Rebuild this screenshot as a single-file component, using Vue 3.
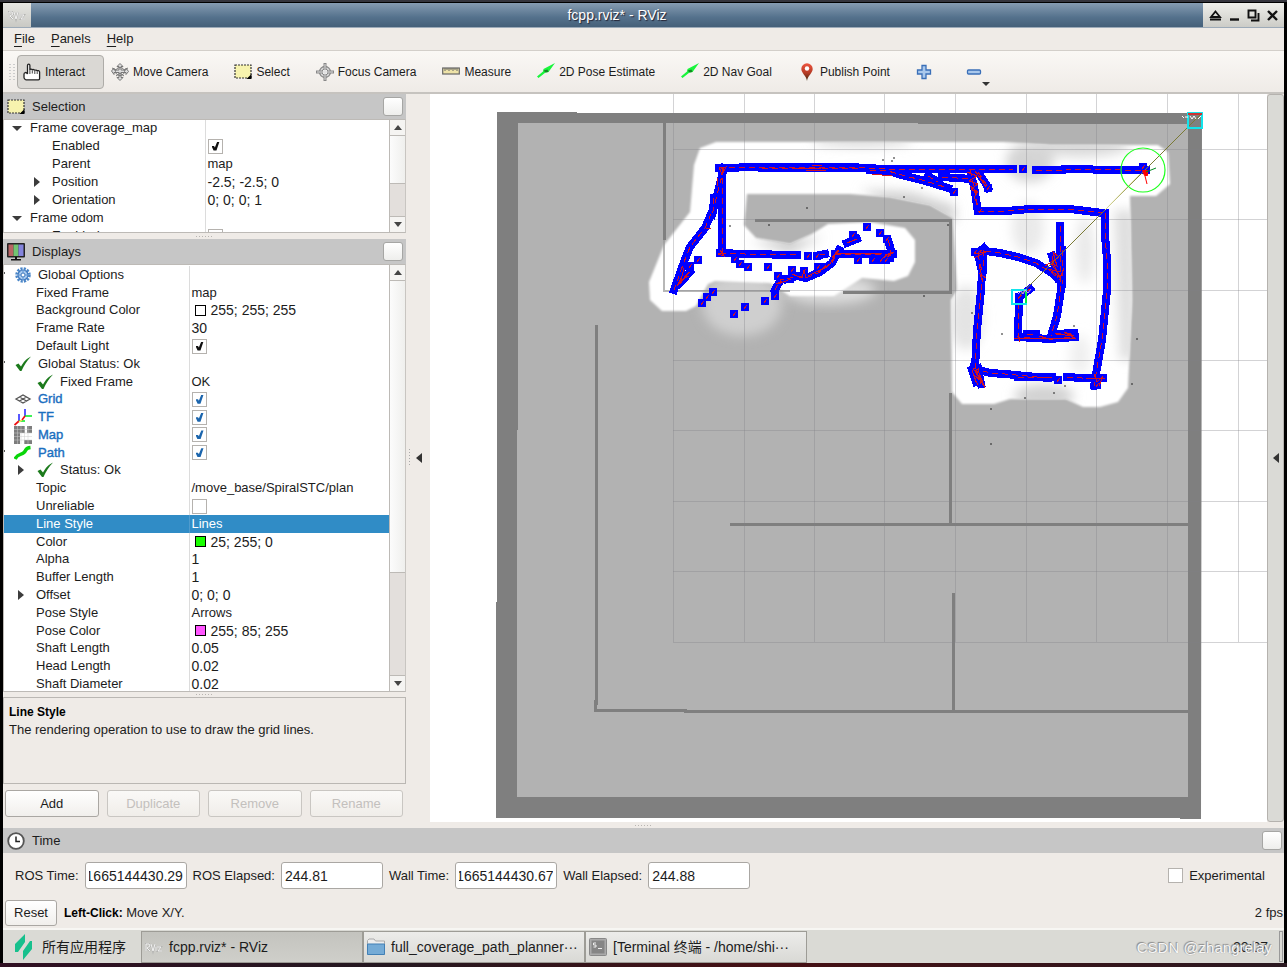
<script setup>
import { ref, onMounted } from 'vue'

const tools = [
  { icon: 'hand', label: 'Interact', active: true },
  { icon: 'move', label: 'Move Camera' },
  { icon: 'select', label: 'Select' },
  { icon: 'focus', label: 'Focus Camera' },
  { icon: 'ruler', label: 'Measure' },
  { icon: 'arrow', label: '2D Pose Estimate' },
  { icon: 'arrow', label: '2D Nav Goal' },
  { icon: 'pin', label: 'Publish Point' },
]

const selectionRows = [
  { name: 'Frame coverage_map', level: 0, arrow: 'down' },
  { name: 'Enabled', level: 1, check: true },
  { name: 'Parent', level: 1, value: 'map' },
  { name: 'Position', level: 1, arrow: 'right', value: '-2.5; -2.5; 0', num: true },
  { name: 'Orientation', level: 1, arrow: 'right', value: '0; 0; 0; 1', num: true },
  { name: 'Frame odom', level: 0, arrow: 'down' },
  { name: 'Enabled', level: 1, check: true },
]

const displayRows = [
  { name: 'Global Options', level: 0, icon: 'gear', tick: true },
  { name: 'Fixed Frame', level: 1, value: 'map' },
  { name: 'Background Color', level: 1, value: '255; 255; 255', num: true, swatch: '#ffffff' },
  { name: 'Frame Rate', level: 1, value: '30', num: true },
  { name: 'Default Light', level: 1, check: true },
  { name: 'Global Status: Ok', level: 0, icon: 'ok', tick: true },
  { name: 'Fixed Frame', level: 1, icon: 'ok', value: 'OK' },
  { name: 'Grid', level: 0, icon: 'grid', check: true, blue: true },
  { name: 'TF', level: 0, icon: 'tf', check: true, blue: true },
  { name: 'Map', level: 0, icon: 'map', check: true, blue: true },
  { name: 'Path', level: 0, icon: 'path', check: true, blue: true, tick: true },
  { name: 'Status: Ok', level: 1, icon: 'ok', arrow: 'right' },
  { name: 'Topic', level: 1, value: '/move_base/SpiralSTC/plan' },
  { name: 'Unreliable', level: 1, check: false },
  { name: 'Line Style', level: 1, value: 'Lines', selected: true },
  { name: 'Color', level: 1, value: '25; 255; 0', num: true, swatch: '#19ff00' },
  { name: 'Alpha', level: 1, value: '1', num: true },
  { name: 'Buffer Length', level: 1, value: '1', num: true },
  { name: 'Offset', level: 1, arrow: 'right', value: '0; 0; 0', num: true },
  { name: 'Pose Style', level: 1, value: 'Arrows' },
  { name: 'Pose Color', level: 1, value: '255; 85; 255', num: true, swatch: '#ff55ff' },
  { name: 'Shaft Length', level: 1, value: '0.05', num: true },
  { name: 'Head Length', level: 1, value: '0.02', num: true },
  { name: 'Shaft Diameter', level: 1, value: '0.02', num: true },
]

const trees = [
  { key: 'selection', title: 'Selection', icon: 'select', rows: selectionRows },
  { key: 'displays', title: 'Displays', icon: 'monitor', rows: displayRows },
]

const times = [
  { id: 'ros-time', label: 'ROS Time:', value: '1665144430.29' },
  { id: 'ros-elapsed', label: 'ROS Elapsed:', value: '244.81' },
  { id: 'wall-time', label: 'Wall Time:', value: '1665144430.67' },
  { id: 'wall-elapsed', label: 'Wall Elapsed:', value: '244.88' },
]
const timeInputs = ref([])
onMounted(() => {
  timeInputs.value.forEach((el) => { el.scrollLeft = el.scrollWidth })
})

const gridX = [673, 744, 814, 884, 955, 1026, 1096, 1167, 1238]
const gridY = [149, 219, 290, 360, 430, 501, 571, 642]

const trails = [
  '719,168 760,167 850,167 885,169 1013,169',
  '762,168 858,168',
  '1036,170 1062,170', '1065,169 1120,170 1146,170',
  '870,170 888,171 905,176 922,180 935,184 948,188',
  '942,177 972,179', '928,176 938,182',
  '722,168 722,253',
  '724,168 717,195 712,215', '714,198 713,210',
  '711,214 705,228 690,247 684,262 674,290',
  '690,272 679,284',
  '720,253 745,254 797,255', '820,255 825,254',
  '835,254 893,254', '888,240 891,250 890,258',
  '775,290 781,279 790,279', '787,279 797,276 806,278 820,272 832,263 839,250',
  '847,243 857,239',
  '970,170 974,186 977,206', '978,172 986,184 988,188',
  '978,211 1006,211 1030,209 1070,209 1103,213',
  '1105,213 1105,235 1107,260 1107,290 1102,340 1097,368 1094,386',
  '985,251 1000,253 1018,257 1036,263 1052,273 1060,280',
  '978,254 982,272 981,290 977,330 975,368',
  '977,254 984,248', '983,250 983,270',
  '1060,226 1060,250 1061,290 1057,316 1051,336',
  '1052,256 1058,278', '1062,250 1062,284',
  '973,368 990,373 1005,374 1048,378', '1018,377 1052,377',
  '972,370 976,382', '978,368 981,384',
  '1067,377 1082,378 1103,378',
  '1030,289 1019,297 1018,337 1050,339 1075,337', '1027,334 1036,334', '1055,334 1074,333',
]

const marks = [
  [1023, 169], [954, 192], [698, 260], [690, 266], [702, 303], [707, 297], [713, 292], [734, 314],
  [745, 307], [765, 301], [775, 296], [808, 256], [817, 256], [735, 259], [740, 264], [748, 267],
  [768, 267], [778, 276], [792, 270], [804, 271], [818, 267], [824, 267], [853, 235], [867, 227],
  [880, 233], [887, 239], [858, 260], [873, 260], [881, 260], [886, 260], [1058, 380], [1143, 167],
  [980, 211], [1097, 385], [975, 252], [988, 188], [1019, 297],
]

const dots = [
  [882, 160], [893, 158], [891, 161], [921, 188], [903, 197], [806, 208], [729, 226], [768, 225],
  [947, 225], [971, 313], [1001, 334], [1073, 326], [1131, 384], [1136, 339], [990, 409],
  [990, 444], [1024, 398], [923, 296], [1053, 393], [1064, 386],
]

const tangles = [
  'M967 172l10 4-8 5 9 3-7 5 6 4M975 171l9 12M980 178l6 9M970 186l8 6-4 5 4 8',
  'M1045 266l14-9-6-5 4 14-6-3 9 14-12-8 13 3M1052 260l8 18 4-10',
  'M974 258l14-7-8 2-6 1M979 264l4 18-3-8 6 4',
  'M973 368l12 20-6-15-4-3 7 12-9-8 5 11M975 372l8 9',
  'M1086 379l19-1M1094 374l3 8 6-6-4 10',
  'M1014 339l60-1-25 1-10-3 14 4M1056 334l18 2-10-4 12 7M1018 334l2 8',
  'M719 170l7-3-4 8-3-8M717 186l1-8M706 228l5 1M720 250l4 6-6-2 8-1',
  'M680 284l9-12-12 14 5-10M684 268l-3 12 8-4',
  'M776 284l6-3-4 3 13-5M792 274l10 4 2-8 2 8M808 276l18-9-8 5 12-8M830 264l8-14-6 8',
  'M881 260l7-6 6-2-7 5M847 243l10-4M838 253l44 0',
  'M797 168h24M806 170h20M812 165h10M872 174l20 2',
]
</script>

<template>
  <div class="screen">
    <svg class="defs" aria-hidden="true">
      <symbol id="i-hand" viewBox="0 0 18 18">
        <path d="M4.500 11V2.500c0-1.800 2.400-1.800 2.400 0V7c0-1.200 2.400-1.200 2.400.300.200-1.200 2.500-1 2.500.400.200-1 2.400-.800 2.400.400.200-.800 2.400-.600 2.400.800V15.500c0 .800-.500 1.300-1.200 1.300H3c-1 0-2-1.400-2-2.600v-3c0-2 2.400-2.400 3.500-.200z" fill="#fff" stroke="#222" stroke-width="1.300" />
        <path d="M6.900 7v4M9.300 7.500v3M11.800 8v3M14.200 8v3" stroke="#444" stroke-width="1" />
      </symbol>
      <symbol id="i-move" viewBox="0 0 18 18">
        <path d="M9 .500l3 3h-2v3.500h5V5l2.500 3.500-2.500 3V9.500h-5v5h2L9 17.500l-3-3h2v-5H3v2L.500 8 3 5v2h5V3.500H6z" fill="#ddd" stroke="#777" />
        <ellipse cx="9" cy="8.500" rx="4.500" ry="4" fill="none" stroke="#777" />
        <path d="M1 5l4 2M13 7l4-2M5 13l4-3 4 3" stroke="#777" fill="none" />
      </symbol>
      <symbol id="i-select" viewBox="0 0 18 18">
        <rect x="1" y="2" width="16" height="13" fill="#f7f3ae" stroke="#333" stroke-width="1.200" stroke-dasharray="2 1" />
        <path d="M17.500 11v5h-5z" fill="#000" />
      </symbol>
      <symbol id="i-focus" viewBox="0 0 18 18">
        <circle cx="9" cy="9" r="5.500" fill="#ddd" stroke="#888" stroke-width="1.300" />
        <circle cx="9" cy="9" r="3" fill="#eee" stroke="#888" />
        <path d="M9 0v7M9 11v7M0 9h7M11 9h7" stroke="#888" stroke-width="3" />
        <path d="M9 1v16M1 9h16" stroke="#ddd" stroke-width="1" />
      </symbol>
      <symbol id="i-ruler" viewBox="0 0 18 18">
        <rect x=".700" y="5" width="16.600" height="6" fill="#eee3a8" stroke="#666" stroke-width="1.200" />
        <path d="M3 5v3M5 5v2M7 5v3M9 5v2M11 5v3M13 5v2M15 5v3" stroke="#666" />
      </symbol>
      <symbol id="i-arrow" viewBox="0 0 18 18">
        <path d="M0 13.500L6 8.500 6.500 6 18 0l-6.500 9-3 .500-7 5.500z" fill="#19f53c" />
        <path d="M6.500 7.500l4-1L11.500 9 8.500 9.500z" fill="#108a20" />
      </symbol>
      <symbol id="i-pin" viewBox="0 0 18 18">
        <defs><linearGradient id="pin-g" x2="0" y2="1"><stop stop-color="#ee5540" /><stop offset=".550" stop-color="#b53b25" /><stop offset="1" stop-color="#3a2a10" /></linearGradient></defs>
        <path d="M9 18C8.500 13 3.300 10 3.300 6a5.700 5.700 0 0 1 11.400 0C14.700 10 9.500 13 9 18z" fill="url(#pin-g)" />
        <circle cx="9" cy="5.500" r="2.200" fill="#fff" />
      </symbol>
      <symbol id="i-plus" viewBox="0 0 18 18">
        <path d="M7 2.500h4V7h4.500v4H11v4.500H7V11H2.500V7H7z" fill="#a9c8ec" stroke="#3a6fb8" stroke-width="1.300" />
      </symbol>
      <symbol id="i-minus" viewBox="0 0 18 18">
        <rect x="2.500" y="7" width="13" height="4" rx="1" fill="#a9c8ec" stroke="#3a6fb8" stroke-width="1.300" />
      </symbol>
      <symbol id="i-monitor" viewBox="0 0 18 18">
        <rect x="0" y="0" width="18" height="14.500" rx="1" fill="#222" />
        <path d="M1.500 1.500h5v11.500h-5z" fill="#b86464" /><path d="M6.500 1.500h5v11.500h-5z" fill="#72c472" /><path d="M11.500 1.500h5v11.500h-5z" fill="#8484dc" />
        <path d="M8 14h2v2h4v1.500H4V16h4z" fill="#111" />
      </symbol>
      <symbol id="i-gear" viewBox="0 0 18 18">
        <circle cx="9" cy="9" r="6.500" fill="none" stroke="#4a86c8" stroke-width="2.500" stroke-dasharray="2.200 1.200" />
        <circle cx="9" cy="9" r="5" fill="#a9caee" stroke="#3d78be" stroke-width="1.200" />
        <circle cx="9" cy="9" r="2" fill="#fff" stroke="#3d78be" />
        <path d="M9 4v3M9 11v3M4 9h3M11 9h3" stroke="#5d94d2" />
      </symbol>
      <symbol id="i-ok" viewBox="0 0 18 18">
        <path d="M1.500 10l3-1.500 2.500 3C9.500 7 12 4 17 1.500 12.500 6 10 10.500 7.500 16H6z" fill="#1c7a1c" />
      </symbol>
      <symbol id="i-grid" viewBox="0 0 18 18">
        <path d="M2 9l7-4 7 4-7 4zM5.500 7l7 4M12.500 7l-7 4" fill="none" stroke="#555" stroke-width="1.300" />
      </symbol>
      <symbol id="i-tf" viewBox="0 0 18 18">
        <path d="M5 6v7M11 1v7" stroke="#22f" stroke-width="1.500" /><path d="M5 13h6M11 8h7" stroke="#0e2" stroke-width="1.500" />
        <path d="M5 13l-4.500 4M11 8l-3 4" stroke="#e11" stroke-width="1.700" /><path d="M8 12l-3 2" stroke="#fd5" stroke-width="1.500" />
      </symbol>
      <symbol id="i-map" viewBox="0 0 18 18">
        <path d="M0 0h18v18H0z" fill="#fff" />
        <path d="M0 0h11v7H6v11H0zM13 0h5v7h-5zM10 14h8v4h-8z" fill="#7d7d7d" />
        <path d="M3.500 0v18M7 0v18M10.500 0v18M14 0v18M0 3.500h18M0 7h18M0 10.500h18M0 14h18" stroke="#ccc" stroke-width=".500" />
      </symbol>
      <symbol id="i-path" viewBox="0 0 18 18">
        <path d="M1 15c3-6 6-3.500 9-6.500S11 4 16.500 3.500" fill="none" stroke="#0ad50a" stroke-width="3.500" />
      </symbol>
      <symbol id="i-clock" viewBox="0 0 18 18">
        <circle cx="9" cy="9" r="7.800" fill="#fff" stroke="#555" stroke-width="1.800" />
        <path d="M9 4.500V9.500h4" fill="none" stroke="#222" stroke-width="1.500" />
      </symbol>
      <symbol id="i-rviz" viewBox="0 0 18 18">
        <path d="M1 13V6h3l1 2-3 2 3 3M6 6l2 7 2-7M11 9v4M12 9h4l-3 4h4" fill="none" stroke="#b5b5b3" stroke-width="2" />
        <path d="M1 13V6h3l1 2-3 2 3 3M6 6l2 7 2-7M11 9v4M12 9h4l-3 4h4" fill="none" stroke="#f3f3f2" stroke-width="1" />
      </symbol>
      <symbol id="i-start" viewBox="0 0 18 26">
        <path d="M10 0v8L3 18H0v-8zM8 26v-9l7-10h2v8z" fill="#17c08d" />
      </symbol>
      <symbol id="i-folder" viewBox="0 0 18 18">
        <path d="M.500 16V2.500L2 1h5l1.500 2h9V16z" fill="#eee" stroke="#aaa" />
        <path d="M.500 6h17v10.500H.500z" fill="#75abd6" stroke="#4280b5" />
      </symbol>
      <symbol id="i-term" viewBox="0 0 18 18">
        <rect x=".500" y=".500" width="17" height="17" rx="1" fill="#aaa" stroke="#888" />
        <rect x="2.500" y="2.500" width="13" height="13" fill="#858585" />
        <path d="M7 5H4.500v2H7v2H4.500M9 10.500h4" fill="none" stroke="#eee" />
      </symbol>
    </svg>

    <div class="window">
      <header class="titlebar">
        <span class="win-icon"><svg class="ico"><use href="#i-rviz" /></svg></span>
        <h1>fcpp.rviz* - RViz</h1>
        <div class="win-buttons">
          <button aria-label="Shade"><svg viewBox="0 0 13 13"><path d="M6.500 2.500L11 8H2zM1 10.500h11" fill="none" stroke="#111" stroke-width="1.800" /></svg></button>
          <button aria-label="Minimize"><svg viewBox="0 0 13 13"><path d="M2 10.500h9" stroke="#111" stroke-width="2.400" /></svg></button>
          <button aria-label="Maximize"><svg viewBox="0 0 13 13"><path d="M1.500 1.500h7v7h-7zM11.500 4v7.500H4" fill="none" stroke="#111" stroke-width="1.900" /></svg></button>
          <button aria-label="Close"><svg viewBox="0 0 13 13"><path d="M2 2l9 9M11 2l-9 9" stroke="#111" stroke-width="2.400" /></svg></button>
        </div>
      </header>

      <nav class="menubar">
        <button><u>F</u>ile</button>
        <button><u>P</u>anels</button>
        <button><u>H</u>elp</button>
      </nav>

      <div class="toolbar">
        <span class="grip"></span>
        <button v-for="t in tools" :key="t.label" class="tool" :class="{ active: t.active }">
          <svg class="ico"><use :href="'#i-' + t.icon" /></svg>{{ t.label }}
        </button>
        <button class="tool bare" aria-label="Add tool"><svg class="ico"><use href="#i-plus" /></svg></button>
        <button class="tool bare" aria-label="Remove tool"><svg class="ico"><use href="#i-minus" /></svg><i class="drop"></i></button>
      </div>

      <main class="work">
        <aside class="dock">
          <template v-for="p in trees" :key="p.key">
            <h2 class="dock-title">
              <svg class="ico"><use :href="'#i-' + p.icon" /></svg><span>{{ p.title }}</span>
              <button class="float" :aria-label="'Float ' + p.title"></button>
            </h2>
            <div class="tree" :class="p.key">
              <div class="rows">
                <table>
                  <colgroup><col class="c-name"><col></colgroup>
                  <tbody>
                    <tr v-for="(r, i) in p.rows" :key="i" :class="{ selected: r.selected }">
                      <td :class="'level' + r.level">
                        <div class="cell" :class="{ ticked: r.tick }">
                          <span v-if="!r.icon || r.level" class="slot"><i v-if="r.arrow" :class="r.arrow"></i></span>
                          <svg v-if="r.icon" class="ico"><use :href="'#i-' + r.icon" /></svg>
                          <label :for="p.key + i" :class="{ blue: r.blue }">{{ r.name }}</label>
                        </div>
                      </td>
                      <td class="value">
                        <div class="cell" :class="{ num: r.num }">
                          <input v-if="r.check !== undefined" :id="p.key + i" type="checkbox" :checked="r.check" :class="{ blue: r.blue }">
                          <span v-if="r.swatch" class="swatch" :style="{ background: r.swatch }"></span>
                          <output v-if="r.value" :id="p.key + i">{{ r.value }}</output>
                        </div>
                      </td>
                    </tr>
                  </tbody>
                </table>
              </div>
              <div class="scroll">
                <span class="sbtn"><i class="up"></i></span>
                <span class="track"><span class="thumb"></span></span>
                <span class="sbtn"><i class="dn"></i></span>
              </div>
            </div>
            <div class="split" :class="p.key"></div>
          </template>
          <section class="help">
            <b>Line Style</b>
            <p>The rendering operation to use to draw the grid lines.</p>
          </section>
          <div class="actions">
            <button class="btn">Add</button>
            <button class="btn" disabled>Duplicate</button>
            <button class="btn" disabled>Remove</button>
            <button class="btn" disabled>Rename</button>
          </div>
        </aside>

        <div class="vsplit"><span class="vdots"></span><i class="left"></i></div>

        <svg class="view" viewBox="430 94 837 728" role="img" aria-label="Map view">
          <defs>
            <filter id="soft" x="-30%" y="-30%" width="160%" height="160%"><feGaussianBlur stdDeviation="6" /></filter>
            <filter id="edge" x="-5%" y="-5%" width="110%" height="110%"><feGaussianBlur stdDeviation="1" /></filter>
            <path id="clear" d="M716 142H1003L1050 145H1158L1168 152 1170 184 1156 196H1130L1132 300 1128 388 1118 402 1100 407H1083L1066 399H1010L994 404H962L952 392 951 300 957 290 953 218 930 205 890 197 850 194H747L744 225 756 238 790 244 812 234 828 224 870 222 905 228 915 240V262L908 276 894 281 862 278 834 296H790L770 283 715 281 708 284 696 306 686 311H662L650 300 649 282 664 245 690 212 694 165 700 148z" />
            <clipPath id="clear-area"><use href="#clear" /></clipPath>
          </defs>
          <path d="M497 112h80v1h625l-1 706h-21v-1H496V602h1z" fill="#7f7f7f" />
          <path d="M518 123h400v1h270v673H517V430h1z" fill="#b2b2b2" />

          <ellipse cx="742" cy="304" rx="40" ry="32" fill="#cfcfcf" filter="url(#soft)" />
          <ellipse cx="830" cy="290" rx="46" ry="14" fill="#ddd" filter="url(#soft)" />
          <use href="#clear" fill="#fff" filter="url(#edge)" />
          <g clip-path="url(#clear-area)">
            <g filter="url(#soft)">
              <ellipse cx="862" cy="141" rx="50" ry="5" fill="#d3d3d3" />
              <ellipse cx="1030" cy="162" rx="24" ry="20" fill="#d4d4d4" />
              <ellipse cx="1080" cy="145" rx="50" ry="12" fill="#d9d9d9" />
              <path d="M750 240L790 252 824 236 800 240z" fill="#c0c0c0" />
              <path d="M860 190L910 192 955 206V222L890 206z" fill="#cfcfcf" />
              <ellipse cx="1028" cy="228" rx="16" ry="26" fill="#eaeaea" />
              <ellipse cx="966" cy="318" rx="17" ry="32" fill="#e4e4e4" />
              <ellipse cx="1044" cy="396" rx="30" ry="12" fill="#d2d2d2" />
              <path d="M1114 210H1135V360H1120z" fill="#dedede" />
              <ellipse cx="1085" cy="250" rx="9" ry="34" fill="#e9e9e9" />
              <ellipse cx="1080" cy="355" rx="10" ry="20" fill="#efefef" />
            </g>
          </g>

          <g class="walls">
            <path d="M664 123V240M755 220H950V292H843M950 393V524M730 524H1188M953 593V711M597 325L596 710H685V711H1188" />
            <path d="M664 240V291H790" class="faint" />
          </g>

          <g class="grid">
            <path v-for="x in gridX" :key="x" :d="`M${x} 94V642`" />
            <path v-for="y in gridY" :key="y" :d="`M673 ${y}H1267`" />
          </g>

          <path v-for="d in dots" :key="d.join()" :d="`M${d[0]} ${d[1]}h2`" class="dot" />
          <g class="blue-trails">
            <polyline v-for="p in trails" :key="p" :points="p" />
            <rect v-for="m in marks" :key="m.join()" :x="m[0] - 4" :y="m[1] - 4" width="8" height="8" />
          </g>
          <g class="red-trails">
            <polyline v-for="p in trails" :key="p" :points="p" />
            <path v-for="m in marks" :key="m.join()" :d="`M${m[0] - 1} ${m[1] + 2}l3-4`" />
            <path v-for="t in tangles" :key="t" :d="t" />
          </g>

          <path d="M1202 113L1020 295" stroke="#7a7a35" stroke-width="1" />
          <path d="M1140 174L1105 210" stroke="#e0e0a0" stroke-width="1" />
          <circle cx="1143" cy="170" r="22" fill="none" stroke="#1dff1d" stroke-width="1.200" />
          <path d="M1142.500 170.500h5v5h-3zM1145 176l2 8" fill="#f00" stroke="#f00" />
          <path d="M1146 172l10-4" stroke="#008a20" />
          <rect x="1188" y="113" width="14" height="15" class="frame" />
          <path d="M1188 114h14" stroke="#c33" stroke-width="2" />
          <path d="M1182 116l2 2M1185 117h3M1190 116l2 3 2-3 2 3M1198 119l3-3" stroke="#fff" fill="none" />
          <rect x="1012" y="290" width="14" height="14" class="frame" />
          <path d="M1026 291v12" stroke="#0e4" stroke-width="2" />
          <path d="M1018 294l3-3 2 3 2-4 3 3 3-4" stroke="#d9e" fill="none" />
        </svg>

        <div class="rightbar"><i class="left"></i></div>
      </main>

      <div class="split"></div>
      <section class="time">
        <h2 class="dock-title">
          <svg class="ico"><use href="#i-clock" /></svg><span>Time</span>
          <button class="float" aria-label="Float Time"></button>
        </h2>
        <div class="time-row">
          <template v-for="t in times" :key="t.id">
            <label :for="t.id">{{ t.label }}</label>
            <input :id="t.id" ref="timeInputs" type="text" :value="t.value" readonly>
          </template>
          <label class="exp"><input type="checkbox">Experimental</label>
        </div>
      </section>
      <footer class="status">
        <button class="btn">Reset</button>
        <span><b>Left-Click:</b> Move X/Y.</span>
        <span class="fps">2 fps</span>
      </footer>

      <div class="taskbar">
        <button class="start"><svg><use href="#i-start" /></svg>所有应用程序</button>
        <button class="task current"><svg class="ico"><use href="#i-rviz" /></svg>fcpp.rviz* - RViz</button>
        <button class="task"><svg class="ico"><use href="#i-folder" /></svg>full_coverage_path_planner···</button>
        <button class="task"><svg class="ico"><use href="#i-term" /></svg>[Terminal 终端 - /home/shi···</button>
        <time>20:07</time>
        <span class="edge-box"></span>
        <span class="watermark">CSDN @zhangrelay</span>
      </div>
    </div>
  </div>
</template>

<style>
body { margin: 0; background: #000; }
</style>

<style scoped>
* { box-sizing: border-box; }
.screen {
  min-height: 100vh;
  display: flex;
  padding: 3px 3px 4px;
  background: linear-gradient(#35353d, #35353d) top / 100% 2px no-repeat,
    linear-gradient(90deg, #300f22, #241820 30%, #461014 60%, #2a1820) bottom / 100% 4px no-repeat, #000;
  color: #1c1c1c;
  font: 13px/16px "Liberation Sans", "Noto Sans CJK SC", sans-serif;
}
.defs { position: absolute; width: 0; height: 0; }
.window { flex: 1; min-width: 0; display: flex; flex-direction: column; background: #efebe7; }
button { font: inherit; color: inherit; border: 0; background: none; padding: 0; white-space: nowrap; }
h1, h2, p { margin: 0; font: inherit; }
.ico { width: 18px; height: 18px; flex: none; display: block; }

.titlebar { display: flex; height: 25px; background: linear-gradient(#869cb2, #54718c 60%, #456079); border-bottom: 1px solid #9caab8; }
.win-icon { width: 28px; display: flex; align-items: center; justify-content: center; background: linear-gradient(#e6e6e2, #c9c9c4); }
.titlebar h1 { flex: 1; text-align: center; font-size: 14px; line-height: 24px; color: #fff; text-shadow: 1px 1px 1px #223; }
.win-buttons { width: 81px; display: flex; align-items: center; justify-content: center; gap: 6px; background: linear-gradient(#efefeb, #ccccc7); }
.win-buttons svg { width: 13px; height: 13px; display: block; }

.menubar { height: 23px; display: flex; align-items: center; gap: 16px; padding-left: 11px; border-bottom: 1px solid #d3cfca; }
.menubar u { text-underline-offset: 3px; }

.toolbar { height: 43px; display: flex; align-items: center; gap: 1px; padding-left: 5px; background: linear-gradient(#faf8f5, #efebe7); border-bottom: 2px solid #c6c3bf; font-size: 12px; }
.grip { width: 7px; height: 18px; margin-right: 1px; background: radial-gradient(circle, #ccc 1px, transparent 1px) 0 0 / 4px 3px; }
.tool { height: 34px; display: flex; align-items: center; gap: 4px; padding: 1px 19px 0 6px; position: relative; }
.tool.active { padding: 0 18px 0 5px; border: 1px solid #aeaca8; border-radius: 4px; background: #dad8d4; }
.tool.bare { padding: 0 26px 0 5px; }
.drop { position: absolute; left: 22px; top: 27px; border: 4px solid transparent; border-top-color: #333; border-bottom: 0; }

.work { flex: 1; min-height: 0; display: flex; }
.dock { width: 403px; flex: none; display: flex; flex-direction: column; }
.dock-title { height: 25px; flex: none; display: flex; align-items: center; gap: 7px; padding: 0 3px 0 4px; background: #c6c6c6; }
.dock-title span { flex: 1; }
.float { width: 20px; height: 19px; border: 1px solid #a6a6a4; border-radius: 3px; background: linear-gradient(#fff, #eeeeec); }

.tree { display: flex; background: #fff; border: 1px solid #bdbab6; border-right-color: #c8c5c1; }
.tree.selection { height: 114px; flex: none; }
.tree.displays { flex: 1; min-height: 0; }
.rows { flex: 1; overflow: hidden; }
.displays .rows { padding-top: 1px; }
table { width: 100%; table-layout: fixed; border-collapse: collapse; }
.displays table { height: calc(100% + 2px); }
td { padding: 0; line-height: 16px; white-space: nowrap; }
.selection table { margin-top: -1px; }
.selection td { height: 18px; }
.selection .c-name { width: 201px; }
.displays .c-name { width: 185px; }
.value { border-left: 1px solid #dcdcdc; padding-left: 2px; }
.cell { height: 16px; display: flex; align-items: center; }
.num { font-size: 14px; }
.cell .ico { margin-right: 6px; }
.selection .level0 { padding-left: 6px; }
.selection .level1 { padding-left: 28px; }
.displays .level0 { padding-left: 10px; }
.displays .level1 { padding-left: 12px; }
.ticked { position: relative; }
.ticked::before { content: ""; position: absolute; left: -10px; top: 5px; width: 1px; height: 2px; background: #555; }
.slot { width: 20px; padding-left: 2px; }
.slot i { display: block; width: 0; height: 0; }
.down { border: 5px solid transparent; border-top-color: #3c3c3c; border-bottom: 0; }
.right { border: 5px solid transparent; border-left: 6px solid #3c3c3c; border-right: 0; }
.blue { color: #1b6fc0; -webkit-text-stroke: 0.4px #1b6fc0; }
.selected { background: #308cc6; color: #fff; }
.selected .value { border-color: #4f9bcd; }
.swatch { width: 11px; height: 11px; margin: 0 5px 0 3px; border: 1px solid #000; }

input[type="checkbox"] { appearance: none; width: 15px; height: 15px; margin: 0; flex: none; border: 1px solid #b5b2ae; background: #fff; color: #111; }
input[type="checkbox"].blue { color: #1b65ad; }
input[type="checkbox"]:checked::before { content: ""; display: block; width: 8px; height: 9px; margin: 2px 3px; background: currentColor; clip-path: polygon(0 50%, 32% 50%, 42% 66%, 72% 0, 100% 0, 62% 100%, 26% 100%); }

.scroll { width: 16px; flex: none; display: flex; flex-direction: column; border-left: 1px solid #bdbab6; }
.sbtn { height: 15px; display: flex; align-items: center; justify-content: center; background: #f5f4f2; }
.up { border: 4px solid transparent; border-bottom: 5px solid #444; border-top: 0; }
.dn { border: 4px solid transparent; border-top: 5px solid #444; border-bottom: 0; }
.track { flex: 1; background: #e3dfdc; border: solid #bdbab6; border-width: 1px 0; }
.thumb { display: block; height: 60%; background: linear-gradient(90deg, #fcfcfc, #efefed); border-bottom: 1px solid #bdbab6; }
.displays .thumb { height: 74%; }

.split { height: 6px; flex: none; background: repeating-linear-gradient(90deg, #b8b5b1 0 1px, transparent 1px 3px) center / 18px 1px no-repeat; }
.split.displays { height: 5px; }
.help { height: 87px; flex: none; padding: 5px; line-height: 18px; border: 1px solid #bab7b3; }
.help b, .status b { font-size: 12px; color: #000; }
.actions { display: flex; gap: 8px; padding: 6px 3px 5px 2px; height: 38px; flex: none; }
.btn { height: 27px; border: 1px solid #aaa7a3; border-radius: 3px; background: linear-gradient(#fff, #f1efec); }
.actions .btn { flex: 1; }
.btn:disabled { color: #c3c0bd; border-color: #c9c6c2; background: linear-gradient(#faf9f7, #f0ede9); }

.vsplit { width: 24px; flex: none; display: flex; align-items: center; gap: 6px; padding-left: 3px; }
.vdots { width: 1px; height: 18px; background: repeating-linear-gradient(#aaa 0 1px, transparent 1px 3px); }
.left { border: 5px solid transparent; border-right: 6px solid #333; border-left: 0; }
.view { flex: 1; min-width: 0; width: 100%; height: 100%; background: #fff; display: block; }
.rightbar { width: 17px; flex: none; display: flex; align-items: center; justify-content: center; background: #dadad6; border: 1px solid #b5b2ae; border-radius: 3px; }

.walls path { fill: none; stroke: #7f7f7f; stroke-width: 3; shape-rendering: crispEdges; }
.walls .faint { stroke: #999; stroke-width: 2; opacity: .7; }
.grid path { stroke: rgba(130, 130, 134, .35); stroke-width: 1; shape-rendering: crispEdges; }
.dot { stroke: #222; stroke-width: 1; }
.blue-trails { shape-rendering: crispEdges; fill: #00f; }
.blue-trails polyline { fill: none; stroke: #00f; stroke-width: 8; stroke-linecap: square; }
.red-trails { fill: none; stroke: #d21420; stroke-width: 1; shape-rendering: crispEdges; }
.red-trails polyline { stroke-dasharray: 6 4; }
.frame { fill: none; stroke: #12e4ec; stroke-width: 2; }

.time .dock-title { padding-right: 2px; }
.time-row { height: 45px; display: flex; align-items: center; gap: 6px; padding: 0 19px 0 12px; }
.time-row input[type="text"] { width: 102px; height: 27px; padding: 0 3px; border: 1px solid #aaa7a3; border-radius: 3px; background: #fff; font: inherit; font-size: 14px; color: #1c1c1c; }
.exp { margin-left: auto; display: flex; align-items: center; gap: 6px; }
.status { height: 32px; display: flex; align-items: center; gap: 7px; padding: 0 1px 0 2px; border-bottom: 2px solid #f7f6f3; }
.status .btn { width: 52px; height: 26px; }
.fps { margin-left: auto; }

.taskbar { position: relative; height: 33px; display: flex; align-items: center; background: #dadad5; font-size: 14px; line-height: 20px; }
.start { width: 138px; height: 33px; display: flex; align-items: center; gap: 9px; padding-left: 12px; }
.start svg { width: 18px; height: 26px; }
.task { width: 222px; height: 32px; display: flex; align-items: center; gap: 6px; padding-left: 3px; border: 1px solid #9d9c96; background: linear-gradient(#ececea, #d9d9d5); }
.task.current { background: linear-gradient(#c3c3be, #cfcfca); }
.taskbar time { margin-left: auto; margin-right: 11px; }
.edge-box { width: 4px; height: 31px; border: 1px solid #999; margin-right: 1px; }
.watermark { position: absolute; right: 12px; bottom: 5px; font-size: 15px; color: #f6f6f6; text-shadow: -1px -1px 1px #888, 0 0 1px #999; }
</style>
